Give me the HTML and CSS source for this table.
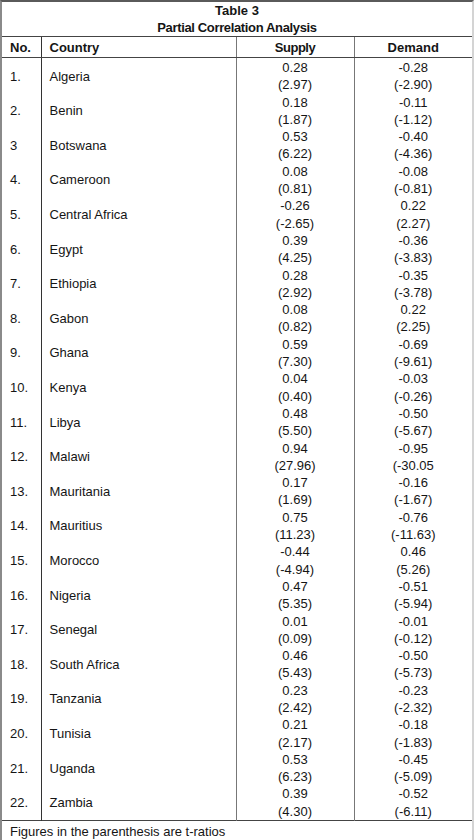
FILE: index.html
```
<!DOCTYPE html>
<html>
<head>
<meta charset="utf-8">
<link rel="stylesheet" href="styles.css">
</head>
<body>
<div class="frame">
<table class="tbl">
<colgroup><col class="c-no"><col class="c-country"><col class="c-val"><col class="c-val"></colgroup>
<thead>
<tr class="title-row"><th colspan="4"><div>Table 3</div><div class="subtitle">Partial Correlation Analysis</div></th></tr>
<tr class="head-row"><th class="no">No.</th><th class="country">Country</th><th class="val tight">Supply</th><th class="val">Demand</th></tr>
</thead>
<tbody>
<tr><td class="no">1.</td><td class="country">Algeria</td><td class="val"><div>0.28</div><div>(2.97)</div></td><td class="val"><div>-0.28</div><div>(-2.90)</div></td></tr>
<tr><td class="no">2.</td><td class="country">Benin</td><td class="val"><div>0.18</div><div>(1.87)</div></td><td class="val"><div>-0.11</div><div>(-1.12)</div></td></tr>
<tr><td class="no">3</td><td class="country">Botswana</td><td class="val"><div>0.53</div><div>(6.22)</div></td><td class="val"><div>-0.40</div><div>(-4.36)</div></td></tr>
<tr><td class="no">4.</td><td class="country">Cameroon</td><td class="val"><div>0.08</div><div>(0.81)</div></td><td class="val"><div>-0.08</div><div>(-0.81)</div></td></tr>
<tr><td class="no">5.</td><td class="country">Central Africa</td><td class="val"><div>-0.26</div><div>(-2.65)</div></td><td class="val"><div>0.22</div><div>(2.27)</div></td></tr>
<tr><td class="no">6.</td><td class="country">Egypt</td><td class="val"><div>0.39</div><div>(4.25)</div></td><td class="val"><div>-0.36</div><div>(-3.83)</div></td></tr>
<tr><td class="no">7.</td><td class="country">Ethiopia</td><td class="val"><div>0.28</div><div>(2.92)</div></td><td class="val"><div>-0.35</div><div>(-3.78)</div></td></tr>
<tr><td class="no">8.</td><td class="country">Gabon</td><td class="val"><div>0.08</div><div>(0.82)</div></td><td class="val"><div>0.22</div><div>(2.25)</div></td></tr>
<tr><td class="no">9.</td><td class="country">Ghana</td><td class="val"><div>0.59</div><div>(7.30)</div></td><td class="val"><div>-0.69</div><div>(-9.61)</div></td></tr>
<tr><td class="no">10.</td><td class="country">Kenya</td><td class="val"><div>0.04</div><div>(0.40)</div></td><td class="val"><div>-0.03</div><div>(-0.26)</div></td></tr>
<tr><td class="no">11.</td><td class="country">Libya</td><td class="val"><div>0.48</div><div>(5.50)</div></td><td class="val"><div>-0.50</div><div>(-5.67)</div></td></tr>
<tr><td class="no">12.</td><td class="country">Malawi</td><td class="val"><div>0.94</div><div>(27.96)</div></td><td class="val"><div>-0.95</div><div>(-30.05</div></td></tr>
<tr><td class="no">13.</td><td class="country">Mauritania</td><td class="val"><div>0.17</div><div>(1.69)</div></td><td class="val"><div>-0.16</div><div>(-1.67)</div></td></tr>
<tr><td class="no">14.</td><td class="country">Mauritius</td><td class="val"><div>0.75</div><div>(11.23)</div></td><td class="val"><div>-0.76</div><div>(-11.63)</div></td></tr>
<tr><td class="no">15.</td><td class="country">Morocco</td><td class="val"><div>-0.44</div><div>(-4.94)</div></td><td class="val"><div>0.46</div><div>(5.26)</div></td></tr>
<tr><td class="no">16.</td><td class="country">Nigeria</td><td class="val"><div>0.47</div><div>(5.35)</div></td><td class="val"><div>-0.51</div><div>(-5.94)</div></td></tr>
<tr><td class="no">17.</td><td class="country">Senegal</td><td class="val"><div>0.01</div><div>(0.09)</div></td><td class="val"><div>-0.01</div><div>(-0.12)</div></td></tr>
<tr><td class="no">18.</td><td class="country">South Africa</td><td class="val"><div>0.46</div><div>(5.43)</div></td><td class="val"><div>-0.50</div><div>(-5.73)</div></td></tr>
<tr><td class="no">19.</td><td class="country">Tanzania</td><td class="val"><div>0.23</div><div>(2.42)</div></td><td class="val"><div>-0.23</div><div>(-2.32)</div></td></tr>
<tr><td class="no">20.</td><td class="country">Tunisia</td><td class="val"><div>0.21</div><div>(2.17)</div></td><td class="val"><div>-0.18</div><div>(-1.83)</div></td></tr>
<tr><td class="no">21.</td><td class="country">Uganda</td><td class="val"><div>0.53</div><div>(6.23)</div></td><td class="val"><div>-0.45</div><div>(-5.09)</div></td></tr>
<tr><td class="no">22.</td><td class="country">Zambia</td><td class="val"><div>0.39</div><div>(4.30)</div></td><td class="val"><div>-0.52</div><div>(-6.11)</div></td></tr>
</tbody>
<tfoot>
<tr class="foot-row"><td colspan="4">Figures in the parenthesis are t-ratios</td></tr>
</tfoot>
</table>
</div>
</body>
</html>
```
FILE: styles.css
```
html, body {
  margin: 0;
  padding: 0;
  background: #fff;
}
body {
  width: 474px;
  height: 840px;
  overflow: hidden;
  font-family: "Liberation Sans", Arial, sans-serif;
  font-size: 13px;
  color: #151515;
}
.frame {
  box-sizing: border-box;
  width: 474px;
  border-top: 2px solid #5a5a5a;
  border-left: 2px solid #8a8a8a;
  border-right: 2px solid #d4d4d4;
}
.tbl {
  width: 100%;
  border-collapse: collapse;
  table-layout: fixed;
}
.c-no { width: 39px; }
.c-country { width: 195px; }
.c-val { width: 118px; }
.tbl th, .tbl td {
  padding: 0;
}
.title-row th {
  height: 34px;
  font-weight: bold;
  line-height: 17px;
  text-align: center;
  border-bottom: 1px solid #444;
  vertical-align: middle;
}
.subtitle {
  letter-spacing: -0.35px;
}
.tight {
  letter-spacing: -0.5px;
}
.head-row th {
  height: 20px;
  font-weight: bold;
  line-height: 17px;
  border-bottom: 1px solid #444;
  vertical-align: middle;
}
.no {
  text-align: left;
  padding-left: 8px !important;
  border-right: 1px solid #333;
}
.country {
  text-align: left;
  padding-left: 8px !important;
  border-right: 1px solid #777;
}
.val {
  text-align: center;
}
.val + .val {
  border-left: 1px solid #777;
}
tbody td {
  vertical-align: middle;
  line-height: 17.3px;
}
tbody tr {
  height: 34.6px;
}
tbody tr:first-child td {
  padding-top: 1px;
}
.foot-row td {
  border-top: 1px solid #444;
  padding-left: 8px;
  height: 20px;
  line-height: 17px;
  vertical-align: middle;
}
```
